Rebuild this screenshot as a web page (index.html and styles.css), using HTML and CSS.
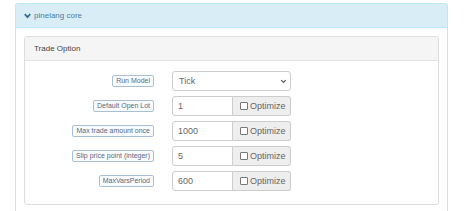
FILE: index.html
```html
<!DOCTYPE html>
<html lang="en">

<head>
    <meta charset="UTF-8">
    <title>pinelang core</title>
    <link rel="stylesheet" href="styles.css">
</head>

<body>
    <div class="panel panel-info">
        <div class="panel-heading">
            <svg class="chevron" width="7" height="6" viewBox="0 0 7 6">
                <path d="M0.8 1.2 L3.5 4.2 L6.2 1.2" fill="none" stroke="#31708f" stroke-width="1.8" />
            </svg>
            pinelang core
        </div>
        <div class="panel-body">
            <div class="panel panel-default">
                <div class="panel-heading">Trade Option</div>
                <div class="form-rows">
                    <div class="form-row">
                        <div class="label-col"><span class="tag">Run Model</span></div>
                        <div class="select-box">
                            <span>Tick</span>
                            <svg width="7" height="5" viewBox="0 0 7 5">
                                <path d="M1.2 1.2 L3.5 3.5 L5.8 1.2" fill="none" stroke="#555" stroke-width="1.2" />
                            </svg>
                        </div>
                    </div>
                    <div class="form-row">
                        <div class="label-col"><span class="tag">Default Open Lot</span></div>
                        <div class="input-group">
                            <div class="input">1</div>
                            <div class="addon"><span class="check"></span>Optimize</div>
                        </div>
                    </div>
                    <div class="form-row">
                        <div class="label-col"><span class="tag">Max trade amount once</span></div>
                        <div class="input-group">
                            <div class="input">1000</div>
                            <div class="addon"><span class="check"></span>Optimize</div>
                        </div>
                    </div>
                    <div class="form-row">
                        <div class="label-col"><span class="tag">Slip price point (integer)</span></div>
                        <div class="input-group">
                            <div class="input">5</div>
                            <div class="addon"><span class="check"></span>Optimize</div>
                        </div>
                    </div>
                    <div class="form-row">
                        <div class="label-col"><span class="tag">MaxVarsPeriod</span></div>
                        <div class="input-group">
                            <div class="input">600</div>
                            <div class="addon"><span class="check"></span>Optimize</div>
                        </div>
                    </div>
                </div>
            </div>
        </div>
    </div>
</body>

</html>
```

FILE: styles.css
```css
body {
    margin: 0;
    padding: 3px 26px 0 15px;
    font-family: "Liberation Sans", Arial, sans-serif;
    background-color: #fff;
    color: #333;
}

.panel {
    border: 1px solid #ddd;
    border-radius: 3px;
    background-color: #fff;
}

.panel-info {
    border-color: #bce8f1;
    border-bottom: none;
    border-radius: 3px 3px 0 0;
}

.panel-heading {
    height: 23px;
    display: flex;
    align-items: center;
    font-size: 8px;
}

.panel-info > .panel-heading {
    background-color: #d9edf7;
    color: #4a7fa5;
    padding-left: 8px;
    border-bottom: 1px solid #bce8f1;
}

.chevron {
    margin-right: 3px;
}

.panel-body {
    padding: 8px 8px 7px 8px;
}

.panel-default > .panel-heading {
    background-color: #f5f5f5;
    border-bottom: 1px solid #e3e3e3;
    padding-left: 9px;
    color: #444;
}

.form-rows {
    display: flex;
    flex-direction: column;
    gap: 5px;
    padding: 10px 0 13px 0;
}

.form-row {
    display: grid;
    grid-template-columns: 129px 119px;
    column-gap: 18px;
    height: 20px;
}

.label-col {
    display: flex;
    align-items: center;
    justify-content: flex-end;
}

.tag {
    font-size: 7px;
    color: #5a6a80;
    border: 1px solid #a9bfd6;
    border-radius: 2px;
    background-color: #f8fbfd;
    padding: 1px 3px;
    line-height: 8px;
}

.select-box {
    border: 1px solid #ccc;
    border-radius: 3px;
    display: flex;
    align-items: center;
    justify-content: space-between;
    padding: 0 3px 0 6px;
    font-size: 9px;
    color: #666;
    box-sizing: border-box;
}

.input-group {
    display: grid;
    grid-template-columns: 61px 58px;
}

.input {
    border: 1px solid #ccc;
    border-radius: 3px 0 0 3px;
    display: flex;
    align-items: center;
    padding-left: 5px;
    font-size: 9px;
    color: #666;
}

.addon {
    border: 1px solid #ccc;
    border-left: none;
    border-radius: 0 3px 3px 0;
    background-color: #eee;
    display: flex;
    align-items: center;
    padding-left: 7px;
    font-size: 9px;
    color: #666;
}

.check {
    width: 6px;
    height: 6px;
    border: 1px solid #777;
    border-radius: 1px;
    background-color: #fff;
    margin-right: 2px;
}
```
